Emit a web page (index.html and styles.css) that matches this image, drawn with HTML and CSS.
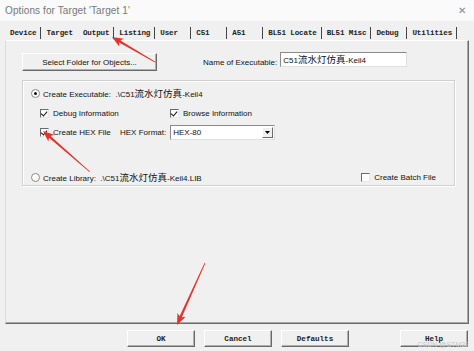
FILE: index.html
```html
<!DOCTYPE html>
<html>
<head>
<meta charset="utf-8">
<link rel="stylesheet" href="styles.css">
</head>
<body>
<div class="window">
  <div class="titlebar">
    <span class="title">Options for Target 'Target 1'</span>
    <span class="close">&#x2715;</span>
  </div>
  <div class="dialog">
    <div class="tabs">
      <div class="tab">Device</div>
      <div class="tab nosep">Target</div>
      <div class="tab active">Output</div>
      <div class="tab">Listing</div>
      <div class="tab">User</div>
      <div class="tab">C51</div>
      <div class="tab">A51</div>
      <div class="tab">BL51 Locate</div>
      <div class="tab">BL51 Misc</div>
      <div class="tab">Debug</div>
      <div class="tab">Utilities</div>
    </div>
    <div class="panel">
      <div class="toprow">
        <div class="btn btn-folder">Select Folder for Objects...</div>
        <span class="lbl lbl-name">Name of Executable:</span>
        <div class="input">C51<span class="cjk">流水灯仿真</span>-Keil4</div>
      </div>
      <div class="group">
        <div class="grow">
          <span class="radio on"></span>
          <span class="lbl">Create Executable:&nbsp; .\C51<span class="cjk">流水灯仿真</span>-Keil4</span>
        </div>
        <div class="grow sub">
          <span class="item item-debug"><span class="check on"></span><span class="lbl">Debug Information</span></span>
          <span class="item"><span class="check on"></span><span class="lbl">Browse Information</span></span>
        </div>
        <div class="grow sub hexrow">
          <span class="item item-hex"><span class="check on"></span><span class="lbl">Create HEX File</span></span>
          <span class="lbl lbl-fmt">HEX Format:</span>
          <div class="select"><span class="seltext">HEX-80</span><span class="selbtn"><svg width="5" height="3" viewBox="0 0 5 3"><path d="M0 0H5L2.5 3Z" fill="#000"/></svg></span></div>
        </div>
        <div class="grow librow">
          <span class="item"><span class="radio"></span><span class="lbl">Create Library:&nbsp; .\C51<span class="cjk">流水灯仿真</span>-Keil4.LIB</span></span>
          <span class="item"><span class="check"></span><span class="lbl">Create Batch File</span></span>
        </div>
      </div>
    </div>
    <div class="footer">
      <div class="btn fbtn">OK</div>
      <div class="btn fbtn">Cancel</div>
      <div class="btn fbtn">Defaults</div>
      <div class="btn fbtn help">Help</div>
    </div>
  </div>
  <div class="watermark">CSDN @STM32</div>
  <svg class="arrows" width="474" height="351" viewBox="0 0 474 351">
    <g fill="#e5322a">
      <polygon transform="translate(112,37) rotate(210.2)" points="0,0 -11,-4.5 -9,-1.2 -50,-0.4 -50,0.4 -9,1.2 -11,4.5"/>
      <polygon transform="translate(43,131) rotate(221.1)" points="0,0 -11,-4.5 -9,-1.2 -62,-0.4 -62,0.4 -9,1.2 -11,4.5"/>
      <polygon transform="translate(177,325) rotate(114.3)" points="0,0 -11,-4.5 -9,-1.2 -68,-0.4 -68,0.4 -9,1.2 -11,4.5"/>
    </g>
  </svg>
</div>
</body>
</html>
```

FILE: styles.css
```css
* { box-sizing: border-box; }
html, body { margin: 0; padding: 0; }
body {
  width: 474px;
  height: 351px;
  overflow: hidden;
  background: #f0f0f0;
  font-family: "Liberation Sans", "Noto Sans CJK SC", sans-serif;
  font-size: 8px;
  color: #111;
}
.window { position: relative; width: 474px; height: 351px; }

.titlebar {
  height: 21px;
  background: #fafafa;
  display: flex;
  align-items: center;
  justify-content: space-between;
  padding: 0 8px 0 5px;
}
.title { font-size: 10px; color: #777; letter-spacing: 0.1px; }
.close { font-size: 10px; color: #888; }

.dialog { padding: 0 5px 0 5px; }

.tabs {
  display: flex;
  height: 19px;
  align-items: center;
  padding-top: 4px;
  font-family: "Liberation Mono", "DejaVu Sans Mono", monospace;
  font-weight: bold;
  font-size: 7.6px;
  letter-spacing: -0.15px;
  color: #222;
}
.tab {
  height: 12px;
  line-height: 12px;
  padding: 0 4px 0 5px;
  min-width: 36px;
  border-right: 1px solid #444;
}
.tab.nosep { border-right-color: transparent; }

.panel {
  height: 284px;
  border-left: 1px solid #dcdcdc;
  border-top: 1px solid #fff;
  border-right: 1px solid #6a6a6a;
  border-bottom: 1px solid #6a6a6a;
  box-shadow: inset -1px -1px 0 #a8a8a8;
  padding: 12px 0 0 16px;
}

.toprow { display: flex; align-items: flex-start; height: 19px; }
.btn {
  display: flex;
  align-items: center;
  justify-content: center;
  background: #f0f0f0;
  border-top: 1px solid #fff;
  border-left: 1px solid #fff;
  border-right: 1px solid #696969;
  border-bottom: 1px solid #696969;
  box-shadow: inset -1px -1px 0 #b0b0b0;
}
.btn-folder { width: 135px; height: 18px; }
.lbl { white-space: nowrap; }
.lbl-name { margin-left: 46px; line-height: 15px; margin-top: 2px; }
.input {
  margin-left: 3px;
  width: 127px;
  height: 15px;
  background: #fff;
  border-top: 1px solid #8a8a8a;
  border-left: 1px solid #8a8a8a;
  border-right: 1px solid #e0e0e0;
  border-bottom: 1px solid #e0e0e0;
  padding-left: 2px;
  line-height: 13px;
  white-space: nowrap;
  margin-top: -1px;
}
.cjk { font-family: "Noto Sans CJK SC", sans-serif; font-size: 9.5px; }

.group {
  margin-top: 8px;
  width: 433px;
  height: 106px;
  border: 1px solid #cfcfcf;
  box-shadow: inset 1px 1px 0 #fff, 1px 1px 0 #fff;
  padding: 5px 18px 0 8px;
}
.grow { display: flex; align-items: center; height: 14px; }
.grow.sub { padding-left: 9px; margin-top: 6px; }
.hexrow { height: 15px; margin-top: 5px !important; }
.librow { justify-content: space-between; margin-top: 30px; }
.item { display: flex; align-items: center; }
.item-debug { width: 130px; }
.item-hex { width: 70px; }

.radio {
  width: 9px; height: 9px;
  border-radius: 50%;
  background: #fff;
  border: 1px solid #8a8a8a;
  margin-right: 3px;
  position: relative;
  flex: none;
}
.radio.on::after {
  content: "";
  position: absolute;
  left: 2px; top: 2px;
  width: 3px; height: 3px;
  border-radius: 50%;
  background: #111;
}
.check {
  width: 9px; height: 9px;
  background: #fff;
  border-top: 1px solid #6a6a6a;
  border-left: 1px solid #6a6a6a;
  border-right: 1px solid #e8e8e8;
  border-bottom: 1px solid #e8e8e8;
  margin-right: 4px;
  position: relative;
  flex: none;
}
.check.on::after {
  content: "";
  position: absolute;
  left: 1px; top: 0px;
  width: 3px; height: 5px;
  border-right: 1.6px solid #111;
  border-bottom: 1.6px solid #111;
  transform: rotate(40deg);
}
.lbl-fmt { margin-left: 10px; margin-right: 4px; }
.select {
  width: 105px;
  height: 15px;
  background: #fff;
  border-top: 1px solid #8a8a8a;
  border-left: 1px solid #8a8a8a;
  border-right: 1px solid #e0e0e0;
  border-bottom: 1px solid #e0e0e0;
  display: flex;
  align-items: center;
  justify-content: space-between;
  padding: 0 1px 0 2px;
}
.selbtn {
  width: 11px; height: 11px;
  background: #f0f0f0;
  border-right: 1px solid #696969;
  border-bottom: 1px solid #696969;
  border-top: 1px solid #fff;
  border-left: 1px solid #fff;
  display: flex; align-items: center; justify-content: center;
}
.selbtn svg { display: block; }

.footer {
  display: flex;
  margin-top: 6px;
  padding-left: 122px;
  gap: 9px;
  font-family: "Liberation Mono", "DejaVu Sans Mono", monospace;
  font-weight: bold;
  font-size: 7.6px;
  color: #222;
}
.fbtn { width: 68px; height: 17px; }
.fbtn.help { margin-left: 42px; }

.watermark {
  position: absolute;
  right: 5px;
  bottom: 3px;
  font-size: 7px;
  color: #c8c8c8;
}
.arrows { position: absolute; left: 0; top: 0; pointer-events: none; }
```
